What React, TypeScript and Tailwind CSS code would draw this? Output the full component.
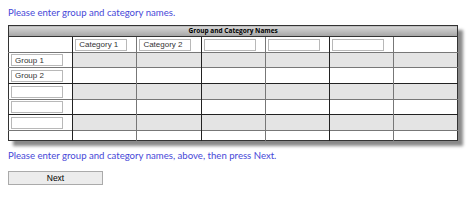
import React from "react";

const cats = ["Category 1", "Category 2", "", "", ""];
const groups = ["Group 1", "Group 2", "", "", ""];

function Box({ value }: { value: string }) {
  return (
    <input
      defaultValue={value}
      className="block w-[52px] h-[12px] border border-[#b8b8b8] bg-white px-[3px] text-[8px] leading-none text-[#333] outline-none [font-family:'Liberation_Sans',Arial,sans-serif]"
    />
  );
}

export default function App() {
  const rowH = ["h-[15px]", "h-[16px]", "h-[16px]", "h-[15px]", "h-[16px]"];
  return (
    <div className="w-[474px] h-[207px] bg-white pl-[8px] pt-[5px] [font-family:Lato,'Open_Sans',sans-serif]">
      <p className="text-[9.6px] leading-[15px] text-[#4848d8]">Please enter group and category names.</p>
      <table className="mt-[5px] w-[450px] table-fixed border-collapse border border-[#333] shadow-[5px_5px_3px_#8a8a8a]">
        <colgroup>
          {Array.from({ length: 7 }).map((_, i) => (
            <col key={i} className="w-[64.2px]" />
          ))}
        </colgroup>
        <thead>
          <tr className="h-[10px]">
            <th
              colSpan={7}
              className="p-0 border-b border-[#333] bg-gradient-to-b from-[#d8d8d8] to-[#a4a4a4] text-center text-[6.5px] font-bold leading-[10px] text-black [font-family:'Open_Sans',sans-serif]"
            >
              Group and Category Names
            </th>
          </tr>
        </thead>
        <tbody>
          <tr className="h-[16px]">
            <td className="p-0 border-r border-[#222]"></td>
            {cats.map((c, i) => (
              <td key={i} className={`p-0 pl-[2px] border-r ${i % 2 === 0 ? "border-[#777]" : "border-[#222]"}`}>
                <Box value={c} />
              </td>
            ))}
            <td className="p-0"></td>
          </tr>
          {groups.map((g, r) => (
            <tr key={r} className={`${rowH[r]} border-t ${r === 2 || r === 4 ? "border-[#222]" : "border-[#777]"}`}>
              <td className="p-0 pl-[2px] border-r border-[#222] bg-white">
                <Box value={g} />
              </td>
              {Array.from({ length: 6 }).map((_, i) => (
                <td
                  key={i}
                  className={`p-0 ${i < 5 ? "border-r" : ""} ${i % 2 === 0 ? "border-[#777]" : "border-[#222]"} ${r % 2 === 0 ? "bg-[#e4e4e4]" : "bg-white"}`}
                ></td>
              ))}
            </tr>
          ))}
          <tr className="h-[10px] border-t border-[#777]">
            <td className="p-0 border-r border-[#222]"></td>
            {Array.from({ length: 6 }).map((_, i) => (
              <td key={i} className={`p-0 ${i < 5 ? "border-r" : ""} ${i % 2 === 0 ? "border-[#777]" : "border-[#222]"}`}></td>
            ))}
          </tr>
        </tbody>
      </table>
      <p className="mt-[7px] text-[9.6px] leading-[15px] text-[#4848d8]">
        Please enter group and category names, above, then press Next.
      </p>
      <button className="mt-[8px] block w-[95px] h-[14px] border border-[#aaa] bg-[#ececec] text-[8.5px] leading-none text-black [font-family:'Liberation_Sans',Arial,sans-serif]">
        Next
      </button>
    </div>
  );
}
